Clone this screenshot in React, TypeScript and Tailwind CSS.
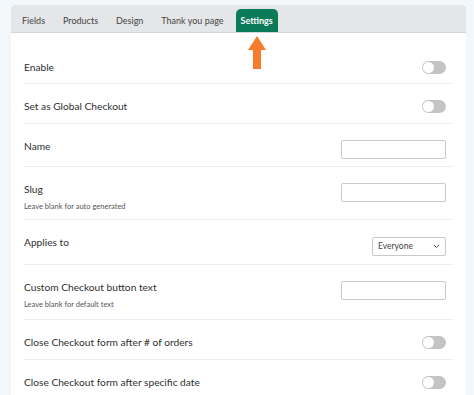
import React from "react";

type Row = {
  label: string;
  hint?: string;
  control: "toggle" | "input" | "select";
  h: string;
};

const rows: Row[] = [
  { label: "Enable", control: "toggle", h: "h-[39px]" },
  { label: "Set as Global Checkout", control: "toggle", h: "h-[40px]" },
  { label: "Name", control: "input", h: "h-[43px]" },
  { label: "Slug", hint: "Leave blank for auto generated", control: "input", h: "h-[53px]" },
  { label: "Applies to", control: "select", h: "h-[45px]" },
  { label: "Custom Checkout button text", hint: "Leave blank for default text", control: "input", h: "h-[55px]" },
  { label: "Close Checkout form after # of orders", control: "toggle", h: "h-[40px]" },
  { label: "Close Checkout form after specific date", control: "toggle", h: "h-[40px]" },
];

const tabs = ["Fields", "Products", "Design", "Thank you page"];

const Toggle = () => (
  <div className="w-[24px] h-[13px] rounded-full bg-[#c4c4c4] flex items-center px-[1px]">
    <div className="w-[11px] h-[11px] rounded-full bg-white" />
  </div>
);

const Control = ({ type }: { type: Row["control"] }) => {
  if (type === "toggle") return <Toggle />;
  if (type === "select")
    return (
      <div className="mt-[1px] w-[74px] h-[19px] border border-[#c9c9c9] rounded-[2px] bg-white flex items-center justify-between pl-[5px] pr-[5px] text-[8.5px] text-[#444]">
        <span>Everyone</span>
        <svg width="7" height="5" viewBox="0 0 7 5" fill="none">
          <path d="M1 1l2.5 2.5L6 1" stroke="#555" strokeWidth="1" />
        </svg>
      </div>
    );
  return <div className="w-[105px] h-[19px] border border-[#c9c9c9] rounded-[2px] bg-white" />;
};

export default function App() {
  return (
    <div
      className="w-[474px] h-[395px] overflow-hidden bg-[#f2f7fb] px-[11px] pt-[5px]"
      style={{ fontFamily: '"Lato", "Open Sans", sans-serif' }}
    >
      <div className="bg-white w-[455px] h-full">
        <div className="h-[28px] bg-[#e4e6e8] rounded-t-[4px] flex items-end pl-[2px] border-b border-[#d6d8da]">
          {tabs.map((t) => (
            <div key={t} className="h-[23px] px-[9px] text-[9px] text-[#444] flex items-center pt-[1px]">
              {t}
            </div>
          ))}
          <div className="relative ml-[3px] h-[23px] px-[5px] rounded-t-[5px] bg-[#0b7a57] text-white font-bold text-[9px] flex items-center pt-[1px]">
            Settings
            <svg
              className="absolute left-1/2 -translate-x-1/2 top-[27px]"
              width="18"
              height="34"
              viewBox="0 0 18 34"
            >
              <path d="M9 0L18 14H13V33H5V14H0Z" fill="#f57c2b" />
            </svg>
          </div>
        </div>

        <div className="px-[13px] pt-[12px]">
          {rows.map((r, i) => (
            <div
              key={r.label}
              className={`${r.h} flex items-start justify-between ${
                i < rows.length - 1 ? "border-b border-[#ececec]" : ""
              }`}
            >
              <div className="flex flex-col pt-[14px]">
                <span className="text-[10.2px] text-[#2f2f2f] leading-[16px]">{r.label}</span>
                {r.hint && (
                  <span className="text-[7.5px] text-[#555] leading-[10px] mt-[5px]">{r.hint}</span>
                )}
              </div>
              <div className="pr-[7px] pt-[16px]">
                <Control type={r.control} />
              </div>
            </div>
          ))}
        </div>
      </div>
    </div>
  );
}
